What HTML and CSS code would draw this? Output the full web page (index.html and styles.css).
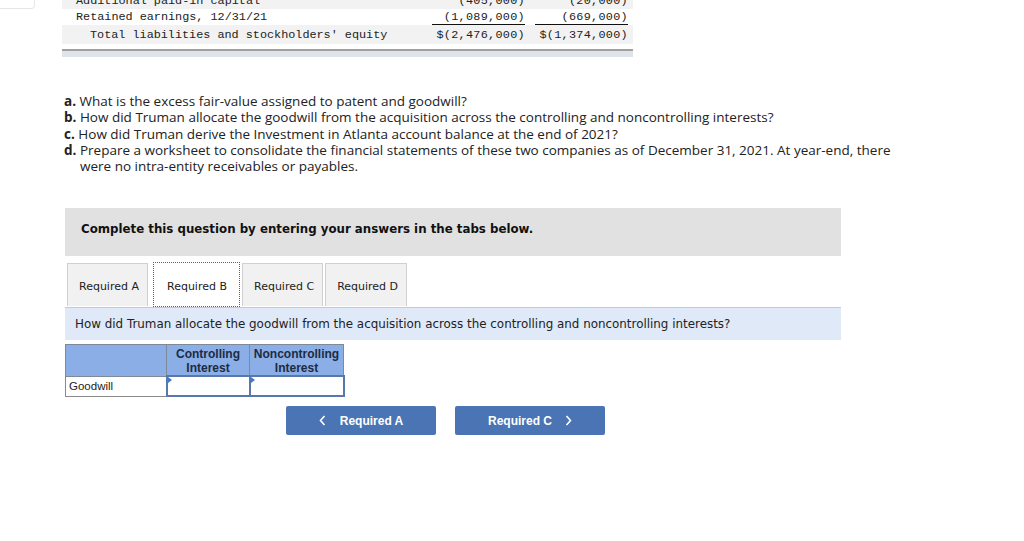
FILE: index.html
```html
<!DOCTYPE html>
<html lang="en">
<head>
  <meta charset="UTF-8" />
  <meta name="viewport" content="width=device-width, initial-scale=1.0"/>
  <title>Consolidation question</title>
  <link rel="stylesheet" href="styles.css">
</head>
<body>

  <!-- leftover edge of the sidebar box -->
  <div class="corner"></div>

  <div class="page">

    <!-- Balance sheet tail -->
    <table class="statement">
      <tr class="shade">
        <td class="label">Additional paid-in capital</td>
        <td class="num">(405,000)</td>
        <td class="num">(20,000)</td>
      </tr>
      <tr>
        <td class="label">Retained earnings, 12/31/21</td>
        <td class="num"><span class="rule">(1,089,000)</span></td>
        <td class="num"><span class="rule">(669,000)</span></td>
      </tr>
      <tr class="shade total">
        <td class="label indent">Total liabilities and stockholders' equity</td>
        <td class="num">$(2,476,000)</td>
        <td class="num">$(1,374,000)</td>
      </tr>
    </table>
    <div class="statement-foot"></div>

    <!-- Questions -->
    <ul class="questions">
      <li><b>a.</b> What is the excess fair-value assigned to patent and goodwill?</li>
      <li><b>b.</b> How did Truman allocate the goodwill from the acquisition across the controlling and noncontrolling interests?</li>
      <li><b>c.</b> How did Truman derive the Investment in Atlanta account balance at the end of 2021?</li>
      <li><b>d.</b> Prepare a worksheet to consolidate the financial statements of these two companies as of December 31, 2021. At year-end, there were no intra-entity receivables or payables.</li>
    </ul>

    <div class="instructions">Complete this question by entering your answers in the tabs below.</div>

    <div class="tabs">
      <button class="tab">Required A</button>
      <button class="tab active">Required B</button>
      <button class="tab">Required C</button>
      <button class="tab">Required D</button>
    </div>

    <div class="prompt">How did Truman allocate the goodwill from the acquisition across the controlling and noncontrolling interests?</div>

    <table class="answer">
      <tr>
        <th class="blank"></th>
        <th>Controlling<br>Interest</th>
        <th>Noncontrolling<br>Interest</th>
      </tr>
      <tr>
        <td class="row-label">Goodwill</td>
        <td class="input"><span class="flag"></span></td>
        <td class="input"><span class="flag"></span></td>
      </tr>
    </table>

    <div class="nav">
      <button class="nav-btn">
        <svg class="chev" width="7" height="11" viewBox="0 0 7 11"><path d="M5.5 1 L1.5 5.5 L5.5 10" fill="none" stroke="#fff" stroke-width="1.6"/></svg>
        Required A
      </button>
      <button class="nav-btn">
        Required C
        <svg class="chev" width="7" height="11" viewBox="0 0 7 11"><path d="M1.5 1 L5.5 5.5 L1.5 10" fill="none" stroke="#fff" stroke-width="1.6"/></svg>
      </button>
    </div>

  </div>

</body>
</html>
```

FILE: styles.css
```css
body {
  margin: 0;
  background: #fff;
  color: #222;
  font-family: "Open Sans", Lato, Arial, sans-serif;
  overflow: hidden;
}

.corner {
  position: absolute;
  top: -18px;
  left: -10px;
  width: 44px;
  height: 26px;
  border-right: 1px solid #e6e6e6;
  border-bottom: 1px solid #e6e6e6;
  border-radius: 0 0 4px 0;
}

.page {
  padding-left: 62px;
}

/* balance sheet */
.statement {
  margin-top: -7px;
  width: 571px;
  border-collapse: collapse;
  font-family: "Liberation Mono", "Courier New", monospace;
  font-size: 11.8px;
  color: #222;
}
.statement td {
  height: 16px;
  padding: 0;
  white-space: nowrap;
}
.statement .shade {
  background: #f2f2f2;
}
.statement .total td {
  height: 19px;
}
.statement .label {
  padding-left: 14px;
}
.statement .indent {
  padding-left: 28px;
}
.statement .num {
  width: 98px;
  text-align: right;
  padding-right: 5px;
  letter-spacing: 0.3px;
}
.statement .rule {
  display: block;
  margin-left: 5px;
  border-bottom: 1px solid #111;
  line-height: 14px;
}
.statement-foot {
  width: 571px;
  height: 6px;
  margin-top: 5px;
  border-top: 2px solid #a0a0a0;
  background: #dfe3ea;
}

/* questions */
.questions {
  list-style: none;
  margin: 36px 0 0 2px;
  padding: 0;
  width: 845px;
  font-size: 13.5px;
  line-height: 16.3px;
  color: #222;
}
.questions li {
  padding-left: 16px;
  text-indent: -16px;
}
.questions b {
  font-weight: 700;
}

.instructions {
  margin: 34px 0 0 3px;
  width: 760px;
  height: 42px;
  padding: 0 0 6px 16px;
  box-sizing: content-box;
  background: #e1e1e1;
  font-family: Verdana, "DejaVu Sans", sans-serif;
  font-size: 11.8px;
  font-weight: bold;
  line-height: 42px;
  color: #111;
}

/* tabs */
.tabs {
  display: flex;
  gap: 2px;
  margin: 7px 0 0 5px;
}
.tab {
  height: 43px;
  padding: 2px 8px 0 11px;
  border: 1px solid #d0d0d0;
  border-bottom: none;
  background: #f1f1f1;
  font-family: Verdana, "DejaVu Sans", sans-serif;
  font-size: 11px;
  color: #222;
}
.tab.active {
  background: #fff;
  border: 1px dotted #3a63b0;
  height: 45px;
  margin-top: -1px;
  margin-left: 3px;
  padding: 3px 12px 0 13px;
}

.prompt {
  margin-left: 3px;
  width: 766px;
  height: 32px;
  padding-left: 10px;
  border-top: 1px solid #c8c8c8;
  background: #dfe9f7;
  font-family: Verdana, "DejaVu Sans", sans-serif;
  font-size: 11.9px;
  line-height: 33px;
  color: #222;
}

/* answer grid */
.answer {
  margin: 4px 0 0 3px;
  border-collapse: collapse;
  font-family: Arial, "Liberation Sans", sans-serif;
  font-size: 12px;
}
.answer th {
  height: 29px;
  padding: 1px 0 0;
  background: #8aaee5;
  border: 1px solid #7f8a99;
  font-weight: bold;
  line-height: 14px;
  color: #1c2b44;
}
.answer th.blank {
  width: 100px;
}
.answer th:nth-child(2) {
  width: 82px;
}
.answer th:nth-child(3) {
  width: 93px;
}
.answer td {
  height: 18px;
  padding: 0;
  border: 1px solid #8a8a8a;
}
.answer .row-label {
  padding-left: 3px;
  font-size: 11.5px;
  color: #222;
}
.answer .input {
  position: relative;
  border: 2px solid #5678ad;
}
.flag {
  position: absolute;
  top: 0;
  left: 0;
  border-left: 4px solid #3e78d6;
  border-top: 3px solid transparent;
  border-bottom: 3px solid transparent;
}

/* prev / next */
.nav {
  display: flex;
  gap: 19px;
  margin: 9px 0 0 224px;
}
.nav-btn {
  display: flex;
  align-items: center;
  justify-content: center;
  gap: 14px;
  width: 150px;
  height: 29px;
  border: none;
  border-radius: 2px;
  background: #4a74b4;
  color: #fff;
  font-family: Arial, "Liberation Sans", sans-serif;
  font-size: 12px;
  font-weight: bold;
}
.nav-btn:last-child {
  gap: 13px;
}
.chev {
  display: block;
}
```
